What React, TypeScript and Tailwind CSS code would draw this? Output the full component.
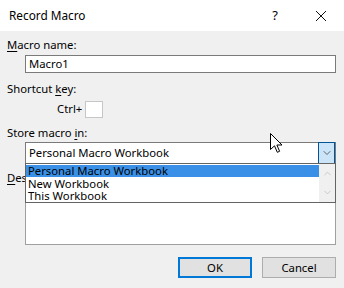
import { ChevronDown, ChevronUp } from 'lucide-react';

const FONT = "font-['Noto_Sans',sans-serif]";

function Label({ text, u, rest, className = '' }: { text: string; u: string; rest: string; className?: string }) {
  return (
    <div className={"leading-[16px] text-[11.3px] text-black " + className}>
      {text}
      <span className="underline underline-offset-2">{u}</span>
      {rest}
    </div>
  );
}

function Cursor() {
  return (
    <svg className="absolute left-[270px] top-[133px]" width="14" height="21" viewBox="0 0 14 21">
      <path
        d="M0.5 0.5 L0.5 16.5 L4.5 12.8 L7.3 19.3 L9.6 18.3 L6.9 12 L12 12 Z"
        fill="#ffffff"
        stroke="#000000"
        strokeWidth="1"
        strokeLinejoin="miter"
      />
    </svg>
  );
}

export default function App() {
  return (
    <div className={"relative w-[344px] h-[288px] overflow-hidden bg-[#f0f0f0] " + FONT}>
      {/* Title bar */}
      <div className="h-[31px] bg-white flex items-center pl-[9px] pr-[14px]">
        <span className="text-[11.8px] text-black">Record Macro</span>
        <span className="ml-auto text-[13px] text-black mr-[37px]">?</span>
        <svg width="12" height="12" viewBox="0 0 12 12" className="mr-[3px]">
          <path d="M1 1 L11 11 M11 1 L1 11" stroke="#111" strokeWidth="1" />
        </svg>
      </div>

      <div className="px-[7px] pt-[6px]">
        <Label text="" u="M" rest="acro name:" />
        <div className="mt-[2px] ml-[18px] w-[311px] h-[18px] bg-white border border-[#7a7a7a] flex items-center pl-[3px] text-[11.3px] text-black">
          Macro1
        </div>

        <Label text="Shortcut " u="k" rest="ey:" className="mt-[8px]" />
        <div className="mt-[4px] flex items-center h-[17px] pl-[50px]">
          <span className="text-[11.3px] text-black">Ctrl+</span>
          <div className="ml-[3px] w-[18px] h-[17px] bg-white border border-[#c6c6c6]" />
        </div>

        <Label text="Store macro " u="i" rest="n:" className="mt-[7px]" />
        <div className="relative mt-[1px] ml-[18px] w-[311px]">
          <div className="h-[22px] bg-white border border-[#7a7a7a] flex items-center pl-[3px] text-[11.3px] text-black">
            Personal Macro Workbook
            <div className="absolute right-[1px] top-0 w-[17px] h-[22px] bg-[#cce4f7] border border-[#005499] flex items-center justify-center">
              <ChevronDown size={12} strokeWidth={1.5} className="text-[#3a3a3a]" />
            </div>
          </div>
          {/* Open dropdown list */}
          <div className="absolute left-0 top-[21px] w-[311px] h-[40px] bg-white border border-[#646464] flex z-10">
            <div className="flex-1 text-[11.3px] text-black">
              <div className="h-[12px] leading-[12px] bg-[#3990e6] pl-[2px] mt-[1px]">Personal Macro Workbook</div>
              <div className="h-[12px] leading-[12px] pl-[2px] mt-[1px]">New Workbook</div>
              <div className="h-[12px] leading-[12px] pl-[2px]">This Workbook</div>
            </div>
            <div className="w-[16px] bg-[#f0f0f0] flex flex-col items-center justify-between py-[4px]">
              <ChevronUp size={11} strokeWidth={1.5} className="text-[#b8b8b8]" />
              <ChevronDown size={11} strokeWidth={1.5} className="text-[#b8b8b8]" />
            </div>
          </div>
        </div>

        <Label text="" u="D" rest="escription:" className="mt-[6px]" />
        <div className="mt-[1px] ml-[18px] w-[311px] h-[58px] bg-white border border-[#a0a0a0]" />

        <div className="mt-[12px] flex justify-end gap-[10px] pr-[1px]">
          <button className="w-[74px] h-[21px] bg-[#e1e1e1] border-2 border-[#0078d7] text-[11.3px] text-black leading-none">
            OK
          </button>
          <button className="w-[74px] h-[21px] bg-[#e1e1e1] border border-[#adadad] text-[11.3px] text-black leading-none">
            Cancel
          </button>
        </div>
      </div>

      <Cursor />
    </div>
  );
}
